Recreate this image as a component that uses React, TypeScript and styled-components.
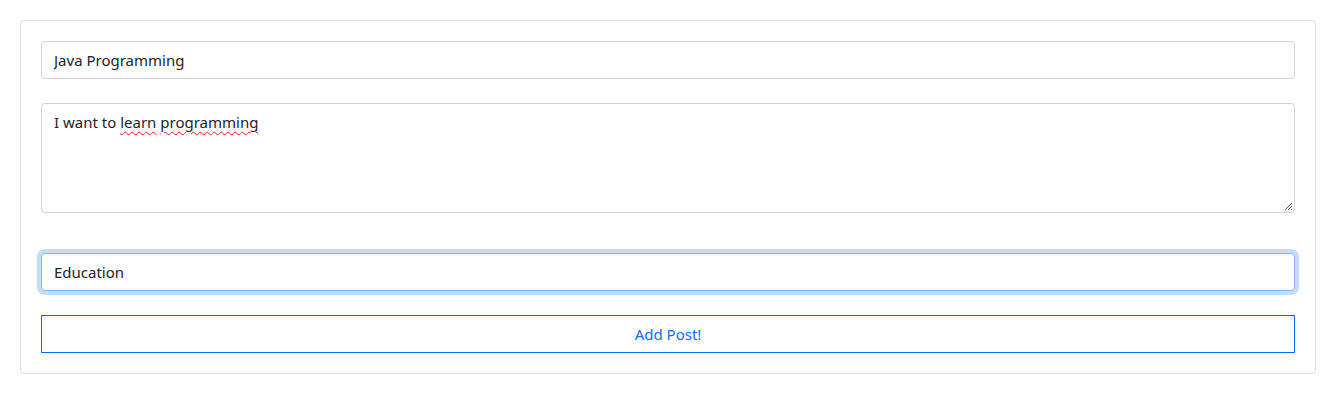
import React from "react";
import styled, { createGlobalStyle } from "styled-components";

const Global = createGlobalStyle`
  * { box-sizing: border-box; }
  body {
    margin: 8px;
    background: #fff;
    font-family: "Segoe UI", "Noto Sans", "Open Sans", sans-serif;
    color: #212529;
  }
`;

const Card = styled.form`
  margin: 12px 0 0 12px;
  width: 1296px;
  border: 1px solid rgba(0, 0, 0, 0.125);
  border-radius: 4px;
  padding: 20px;
  display: flex;
  flex-direction: column;
`;

const Input = styled.input<{ $focused?: boolean; $mb: number }>`
  display: block;
  width: 100%;
  height: 38px;
  padding: 6px 12px;
  font: inherit;
  font-size: 15px;
  line-height: 24px;
  color: #212529;
  background: #fff;
  border: 1px solid ${(p) => (p.$focused ? "#86b7fe" : "#ced4da")};
  border-radius: 4px;
  outline: none;
  margin: 0 0 ${(p) => p.$mb}px 0;
  box-shadow: ${(p) => (p.$focused ? "0 0 0 4px rgba(13,110,253,.25)" : "none")};
`;

const TextBox = styled.div`
  position: relative;
  width: 100%;
  height: 110px;
  padding: 6px 12px;
  font-size: 15px;
  line-height: 24px;
  border: 1px solid #ced4da;
  border-radius: 4px;
  margin-bottom: 40px;
`;

const Misspelled = styled.span`
  text-decoration: underline wavy #e0271f;
  text-decoration-thickness: 1px;
  text-underline-offset: 3px;
`;

const Grip = styled.svg`
  position: absolute;
  right: 1px;
  bottom: 1px;
`;

const Button = styled.button`
  width: 100%;
  height: 38px;
  font: inherit;
  font-size: 15px;
  color: #0d6efd;
  background: #fff;
  border: 1px solid #0d6efd;
  border-radius: 0;
  cursor: pointer;
`;

export default function App() {
  return (
    <>
      <Global />
      <Card onSubmit={(e) => e.preventDefault()}>
        <Input $mb={24} defaultValue="Java Programming" />
        <TextBox role="textbox">
          I want to <Misspelled>learn</Misspelled> <Misspelled>programming</Misspelled>
          <Grip width="10" height="10" viewBox="0 0 10 10">
            <path d="M9 2 L2 9 M9 5 L5 9 M9 8 L8 9" stroke="#555" strokeWidth="1" />
          </Grip>
        </TextBox>
        <Input $mb={24} $focused defaultValue="Education" />
        <Button type="submit">Add Post!</Button>
      </Card>
    </>
  );
}
